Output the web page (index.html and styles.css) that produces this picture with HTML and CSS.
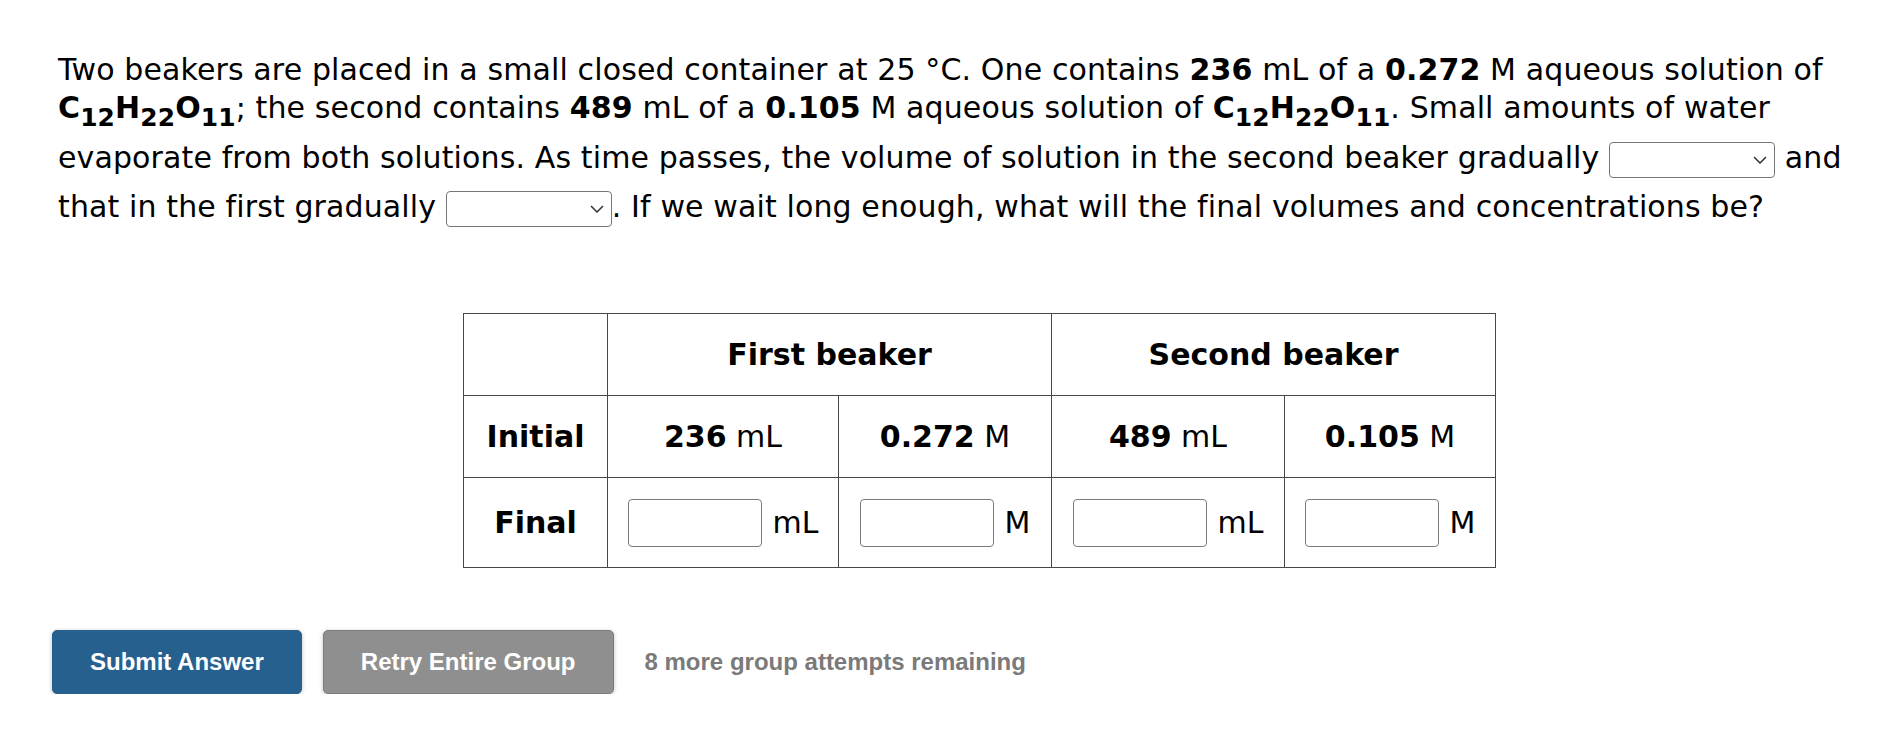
FILE: index.html
```html
<!DOCTYPE html>
<html lang="en">
<head>
<meta charset="utf-8">
<title>Two beakers</title>
<link rel="stylesheet" href="styles.css">
</head>
<body>
<div class="question">
  <p class="prompt">Two beakers are placed in a small closed container at 25 °C. One contains <b>236</b> mL of a <b>0.272</b> M aqueous solution of <b class="formula">C<sub>12</sub>H<sub>22</sub>O<sub>11</sub></b>; the second contains <b>489</b> mL of a <b>0.105</b> M aqueous solution of <b class="formula">C<sub>12</sub>H<sub>22</sub>O<sub>11</sub></b>. Small amounts of water evaporate from both solutions. As time passes, the volume of solution in the second beaker gradually <span class="select-wrap"><select class="choice" aria-label="second beaker change"><option></option><option>increases</option><option>decreases</option><option>stays the same</option></select><svg class="chev" viewBox="0 0 14 8" width="14" height="8"><path d="M1 1 L7 7 L13 1" fill="none" stroke="#333" stroke-width="1.5"/></svg></span> and that in the first gradually <span class="select-wrap"><select class="choice" aria-label="first beaker change"><option></option><option>increases</option><option>decreases</option><option>stays the same</option></select><svg class="chev" viewBox="0 0 14 8" width="14" height="8"><path d="M1 1 L7 7 L13 1" fill="none" stroke="#333" stroke-width="1.5"/></svg></span>. If we wait long enough, what will the final volumes and concentrations be?</p>

  <table class="grid">
    <colgroup>
      <col class="c-label">
      <col class="c-vol1">
      <col class="c-conc1">
      <col class="c-vol2">
      <col class="c-conc2">
    </colgroup>
    <tr class="r-head">
      <td></td>
      <th colspan="2">First beaker</th>
      <th colspan="2">Second beaker</th>
    </tr>
    <tr class="r-init">
      <th>Initial</th>
      <td><b>236</b> mL</td>
      <td><b>0.272</b> M</td>
      <td><b>489</b> mL</td>
      <td><b>0.105</b> M</td>
    </tr>
    <tr class="r-final">
      <th>Final</th>
      <td><div class="field"><input type="text" class="num" aria-label="first volume"><span>mL</span></div></td>
      <td><div class="field"><input type="text" class="num" aria-label="first concentration"><span>M</span></div></td>
      <td><div class="field"><input type="text" class="num" aria-label="second volume"><span>mL</span></div></td>
      <td><div class="field"><input type="text" class="num" aria-label="second concentration"><span>M</span></div></td>
    </tr>
  </table>

  <div class="actions">
    <button class="btn btn-primary">Submit Answer</button>
    <button class="btn btn-secondary">Retry Entire Group</button>
    <span class="attempts">8 more group attempts remaining</span>
  </div>
</div>
</body>
</html>
```

FILE: styles.css
```css
html, body {
  margin: 0;
  padding: 0;
  background: #ffffff;
}

body {
  font-family: "DejaVu Sans", Verdana, sans-serif;
  font-size: 30px;
  color: #000;
}

.question {
  padding: 51px 0 0 58px;
}

.prompt {
  margin: 0;
  width: 1800px;
  line-height: 38px;
  letter-spacing: 0.12px;
}

.formula sub {
  font-size: 0.83em;
  line-height: 35px;
  vertical-align: -8px;
}

.select-wrap {
  position: relative;
  display: inline-block;
  overflow: hidden;
  margin: 6.5px 0;
  vertical-align: -15.9px;
}

.choice {
  appearance: none;
  -webkit-appearance: none;
  display: block;
  box-sizing: border-box;
  width: 166px;
  height: 36px;
  margin: 0;
  border: 1px solid #767676;
  border-radius: 4px;
  background: #fff;
  font: inherit;
  font-size: 20px;
}

.chev {
  position: absolute;
  right: 8px;
  top: 14px;
}

.grid {
  border-collapse: collapse;
  margin: 80px 0 0 405px;
  table-layout: fixed;
  width: 1032px;
}

.c-label { width: 144px; }
.c-vol1 { width: 231px; }
.c-conc1 { width: 213px; }
.c-vol2 { width: 233px; }
.c-conc2 { width: 211px; }

.grid td,
.grid th {
  border: 1px solid #484848;
  text-align: center;
  vertical-align: middle;
  padding: 0;
  font-weight: normal;
}

.grid th {
  font-weight: bold;
}

.r-head > * { height: 81px; }
.r-init > * { height: 81px; }
.r-final > * { height: 89px; }

.field {
  display: flex;
  align-items: center;
  justify-content: center;
  gap: 11px;
}

.num {
  box-sizing: border-box;
  width: 134px;
  height: 48px;
  margin: 0;
  border: 1px solid #7a7a7a;
  border-radius: 4px;
  background: #fff;
  font: inherit;
}

.actions {
  display: flex;
  align-items: center;
  gap: 21px;
  margin: 62px 0 0 -6px;
}

.btn {
  height: 64px;
  padding: 0 37px;
  border-radius: 5px;
  font-family: "Liberation Sans", Arial, sans-serif;
  font-weight: bold;
  font-size: 24px;
  color: #fff;
  cursor: pointer;
  box-shadow: 0 1px 4px rgba(0, 0, 0, 0.25);
}

.btn-primary {
  background: #26608f;
  border: 1px solid #26608f;
}

.btn-secondary {
  background: #8f8f8f;
  border: 1px solid #7c7c7c;
}

.attempts {
  margin-left: 10px;
  font-family: "Liberation Sans", Arial, sans-serif;
  font-weight: bold;
  font-size: 24px;
  color: #7a7a7a;
}
```
